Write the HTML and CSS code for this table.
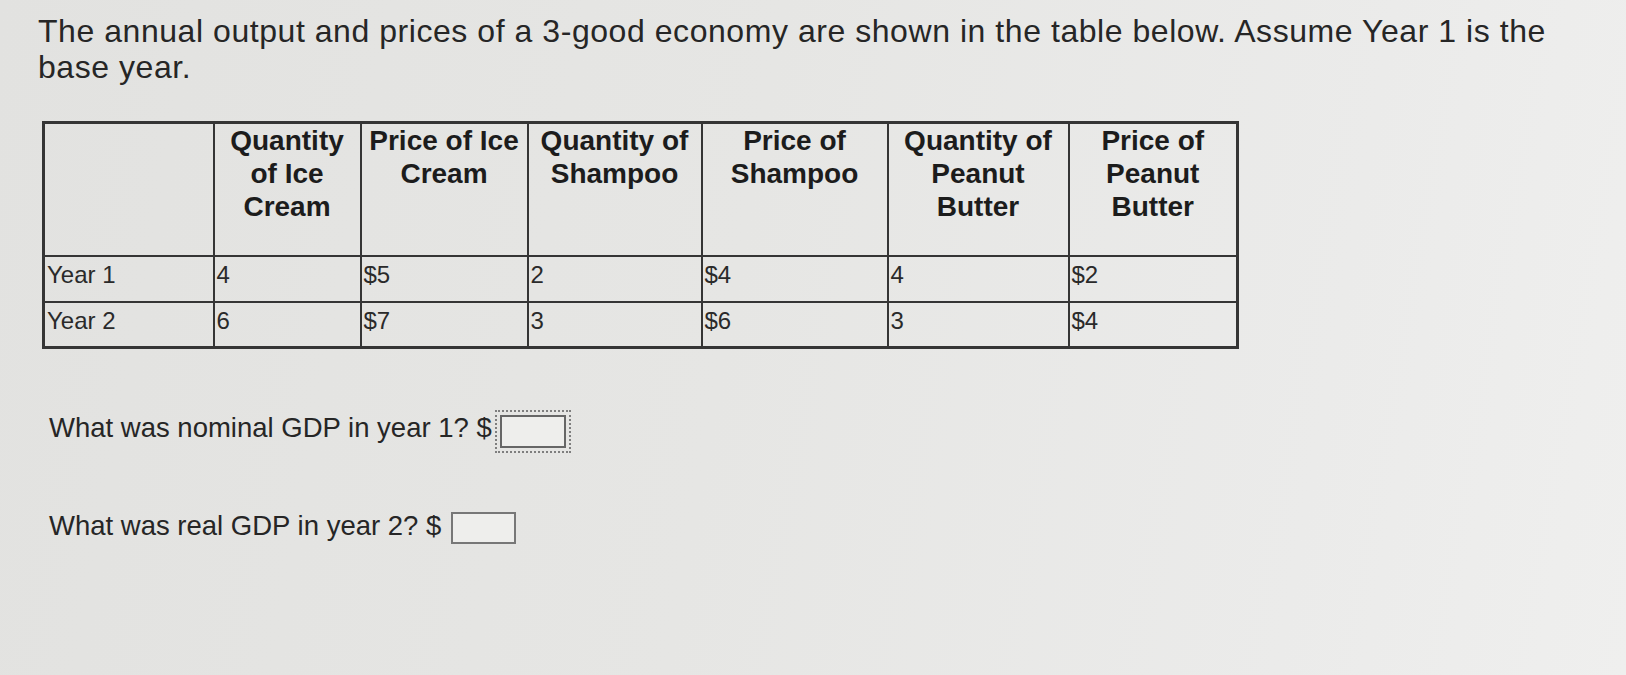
FILE: index.html
```html
<!DOCTYPE html>
<html lang="en">
<head>
<meta charset="utf-8">
<title>GDP question</title>
<link rel="stylesheet" href="styles.css">
</head>
<body>
<main class="page">
  <p class="prompt">The annual output and prices of a 3-good economy are shown in the table below. Assume Year 1 is the base year.</p>

  <table class="data">
    <colgroup>
      <col class="c0"><col class="c1"><col class="c2"><col class="c3"><col class="c4"><col class="c5"><col class="c6">
    </colgroup>
    <thead>
      <tr class="head-row">
        <th></th>
        <th>Quantity of Ice Cream</th>
        <th>Price of Ice Cream</th>
        <th>Quantity of Shampoo</th>
        <th>Price of Shampoo</th>
        <th>Quantity of Peanut Butter</th>
        <th>Price of Peanut Butter</th>
      </tr>
    </thead>
    <tbody>
      <tr>
        <td>Year 1</td><td>4</td><td>$5</td><td>2</td><td>$4</td><td>4</td><td>$2</td>
      </tr>
      <tr>
        <td>Year 2</td><td>6</td><td>$7</td><td>3</td><td>$6</td><td>3</td><td>$4</td>
      </tr>
    </tbody>
  </table>

  <div class="question q1">
    <span class="q-text">What was nominal GDP in year 1? $</span>
    <span class="focus-ring"><span class="answer"></span></span>
  </div>

  <div class="question q2">
    <span class="q-text">What was real GDP in year 2? $</span>
    <span class="answer plain"></span>
  </div>
</main>
</body>
</html>
```

FILE: styles.css
```css
html, body {
  margin: 0;
  padding: 0;
}

body {
  width: 1626px;
  height: 675px;
  overflow: hidden;
  background: linear-gradient(100deg, #e2e2e0 0%, #e6e6e4 45%, #ebebea 80%, #efefee 100%);
  font-family: "Liberation Sans", Arial, sans-serif;
  color: #2c2c2c;
}

.page {
  padding: 13px 0 0 38px;
}

.prompt {
  margin: 0;
  width: 1532px;
  font-size: 32px;
  line-height: 36px;
  letter-spacing: 0.55px;
  color: #262626;
}

.data {
  margin: 36px 0 0 4px;
  width: 1196px;
  table-layout: fixed;
  border-collapse: collapse;
  border: 3px solid #353535;
}

.c0 { width: 170px; }
.c1 { width: 147px; }
.c2 { width: 167px; }
.c3 { width: 174px; }
.c4 { width: 186px; }
.c5 { width: 181px; }
.c6 { width: 169px; }

.data th,
.data td {
  border: 2px solid #353535;
  vertical-align: top;
}

.head-row {
  height: 133px;
}

.data th {
  padding: 0 4px;
  font-size: 28px;
  line-height: 33px;
  font-weight: bold;
  text-align: center;
  color: #1c1c1c;
}

.data tbody tr {
  height: 46px;
}

.data td {
  padding: 4px 2px 0 2px;
  font-size: 24px;
  line-height: 28px;
  color: #2a2a2a;
}

.question {
  display: flex;
  align-items: flex-start;
  margin-left: 11px;
}

.q1 {
  margin-top: 61px;
}

.q2 {
  margin-top: 55px;
}

.q-text {
  font-size: 27.5px;
  line-height: 36px;
  white-space: nowrap;
  color: #262626;
}

.focus-ring {
  display: block;
  margin-left: 3px;
  padding: 3px;
  border: 2px dotted #7e7e7e;
}

.answer {
  display: block;
  width: 62px;
  height: 29px;
  border: 2px solid #666666;
  background: #eeeeec;
}

.answer.plain {
  margin: 4px 0 0 10px;
  width: 61px;
  height: 28px;
  border-color: #777777;
}
```
